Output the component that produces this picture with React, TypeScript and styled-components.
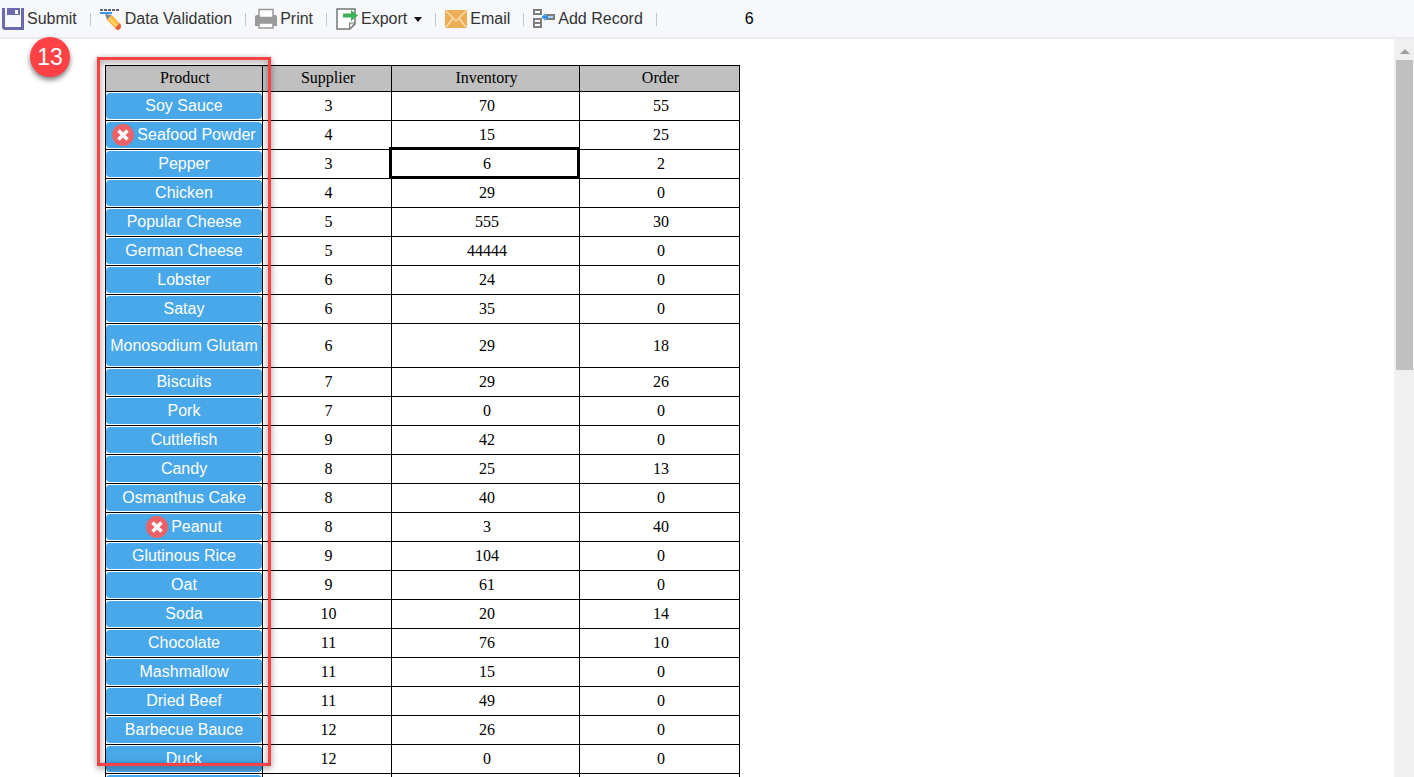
import React from "react";
import styled, { createGlobalStyle } from "styled-components";

const GlobalStyle = createGlobalStyle`
  * { box-sizing: border-box; }
  body {
    margin: 0;
    background: #fff;
    color: #000;
    font-family: "Liberation Serif", "Times New Roman", serif;
  }
`;

const Page = styled.div`
  display: flex;
  flex-direction: column;
  height: 100vh;
  overflow: hidden;
`;

const Toolbar = styled.header`
  display: flex;
  flex: none;
  align-items: center;
  height: 39px;
  padding: 1px 0 0 2px;
  background: #f7f8fb;
  border-bottom: 2px solid #ebecf0;
`;

const ToolButton = styled.button`
  display: flex;
  align-items: center;
  gap: 3px;
  padding: 0;
  border: 0;
  background: none;
  color: #333;
  font: 16px/22px "Liberation Sans", Arial, sans-serif;
  white-space: nowrap;
  cursor: pointer;

  svg { flex: none; }
`;

const Separator = styled.span`
  flex: none;
  width: 1px;
  height: 13px;
  margin: 0 9px 0 13px;
  background: #c4c5c8;
`;

const Caret = styled.span`
  margin-left: 4px;
  border: 4px solid transparent;
  border-top: 5px solid #111;
  border-bottom: 0;
`;

const CellInput = styled.input`
  width: 120px;
  margin-left: 79px;
  padding: 0;
  border: 0;
  background: none;
  color: #000;
  font: 16px/22px "Liberation Sans", Arial, sans-serif;
  outline: none;
`;

const Body = styled.main`
  display: flex;
  flex: 1;
  min-height: 0;
`;

const Viewport = styled.div`
  flex: 1;
  min-width: 0;
  padding: 26px 0 0 105px;
`;

const Sheet = styled.div`
  position: relative;
  width: 635px;
`;

const Grid = styled.table`
  width: 100%;
  table-layout: fixed;
  border-collapse: collapse;
  font-size: 16px;
  line-height: 20px;
  text-align: center;
`;

const Col = styled.col<{ $width: number }>`
  width: ${(p) => p.$width}px;
`;

const HeadCell = styled.th`
  height: 26px;
  padding: 0 0 2px 2px;
  border: 1px solid #000;
  background: #c0c0c0;
  font-weight: 400;
`;

const Row = styled.tr<{ $tall?: boolean }>`
  height: ${(p) => (p.$tall ? 44 : 29)}px;
`;

const Cell = styled.td<{ $selected?: boolean }>`
  position: relative;
  padding: 0 0 0 3px;
  border: 1px solid #000;

  &::after {
    content: "";
    display: ${(p) => (p.$selected ? "block" : "none")};
    position: absolute;
    inset: -3px -1px -1px -3px;
    border: 3px solid #000;
  }
`;

const ProductCell = styled.td`
  padding: 0;
  border: 1px solid #000;
`;

const ProductButton = styled.button<{ $tall?: boolean }>`
  display: flex;
  align-items: center;
  justify-content: center;
  gap: 3px;
  width: 100%;
  height: ${(p) => (p.$tall ? 41 : 26)}px;
  padding: 0;
  border: 0;
  border-radius: 4px;
  background: #48a8ea;
  color: #fff;
  font: 16px/20px "Liberation Sans", Arial, sans-serif;
  white-space: nowrap;
  cursor: pointer;

  svg { flex: none; }
`;

const Highlight = styled.div`
  position: absolute;
  top: -8px;
  left: -8px;
  width: 174px;
  height: 709px;
  border: 3px solid #fe4145;
  filter: drop-shadow(0 2px 3px rgba(0, 0, 0, 0.55));
  pointer-events: none;
`;

const StepBadge = styled.div`
  position: absolute;
  top: -28px;
  left: -75px;
  width: 40px;
  height: 40px;
  border-radius: 50%;
  background: #fe4145;
  box-shadow: 0 3px 5px rgba(0, 0, 0, 0.5);
  color: #fff;
  font: 23px/40px "Liberation Sans", Arial, sans-serif;
  text-align: center;
`;

const ScrollTrack = styled.div`
  flex: none;
  width: 20px;
  padding: 0 1px 0 2px;
  background: #f0f0f0;
`;

const ScrollUp = styled.div`
  display: flex;
  align-items: center;
  justify-content: center;
  height: 21px;
  padding-top: 3px;

  &::before {
    content: "";
    border: 5px solid transparent;
    border-bottom-color: #a0a0a0;
    border-top: 0;
  }
`;

const ScrollThumb = styled.div`
  height: 42%;
  background: #c0c0c0;
`;

const SaveIcon = () => (
  <svg width="22" height="22" viewBox="0 0 22 22" aria-hidden="true">
    <path d="M0 0H22V22H2L0 20Z" fill="#6a69ae" />
    <path d="M3 0H19V9H3Z" fill="#f7f8fb" />
    <path d="M5 0H18V7H5Z" fill="#6a69ae" />
    <path d="M13 2H16V6H13Z" fill="#f7f8fb" />
    <path d="M3 9H19V19H3Z" fill="#f7f8fb" />
  </svg>
);

const ValidationIcon = () => (
  <svg width="22" height="22" viewBox="0 0 22 22" aria-hidden="true">
    <path d="M0 2H20" stroke="#666" strokeWidth="2" strokeDasharray="3 1" />
    <path d="M0 5H12" stroke="#3d97f2" strokeWidth="2" />
    <path d="M5 6L7 12L12 7Z" fill="#888" />
    <path d="M7 12L12 7L20 16L15 20Z" fill="#f8b83e" />
    <path d="M9 10L17 18" stroke="#ffd36e" strokeWidth="2" />
    <path d="M15 20L20 15L21 18Q21 22 17 22Z" fill="#ee5a31" />
  </svg>
);

const PrintIcon = () => (
  <svg width="22" height="22" viewBox="0 0 22 22" aria-hidden="true">
    <rect x="4" y="1.500" width="14" height="8" fill="#fff" stroke="#999" strokeWidth="1.500" />
    <path d="M2 7H4V10H18V7H20Q22 7 22 9V18H0V9Q0 7 2 7Z" fill="#999" />
    <rect x="4" y="15" width="14" height="5" fill="#fff" stroke="#999" strokeWidth="1.500" />
  </svg>
);

const ExportIcon = () => (
  <svg width="22" height="22" viewBox="0 0 22 22" aria-hidden="true">
    <path d="M1 1H19V16L14 21H1Z" fill="#fff" stroke="#777" strokeWidth="1.500" />
    <path d="M19 15H13.500V21Z" fill="#eee" stroke="#777" />
    <path d="M7 5.500H15V2L22 7.500L15 13V9.500H7Z" fill="#42b058" />
  </svg>
);

const EmailIcon = () => (
  <svg width="22" height="18" viewBox="0 0 22 18" aria-hidden="true">
    <rect width="22" height="18" rx="1" fill="#edaf54" />
    <path d="M1 1L11 11L21 1M1 17L8 8.500M21 17L14 8.500" fill="none" stroke="#fbe3bd" strokeWidth="1.200" />
  </svg>
);

const AddRecordIcon = () => (
  <svg width="22" height="22" viewBox="0 0 22 22" aria-hidden="true">
    <g fill="#fff" stroke="#7d7d7d" strokeWidth="2">
      <rect x="1" y="2" width="7" height="4" />
      <rect x="1" y="11" width="7" height="4" />
      <rect x="1" y="15" width="7" height="4" />
      <rect x="14" y="7" width="7" height="4" fill="#a9d3f7" />
    </g>
    <path d="M8.500 9L12.500 5V8H15V10H12.500V13Z" fill="#3292f3" />
  </svg>
);

const ErrorIcon = () => (
  <svg width="22" height="22" viewBox="0 0 22 22" role="img" aria-label="Error">
    <circle cx="11" cy="11" r="11" fill="#ea6166" />
    <path d="M6.500 6.500L15.500 15.500M15.500 6.500L6.500 15.500" stroke="#fff" strokeWidth="3.500" />
  </svg>
);

const tools = [
  { label: "Submit", icon: <SaveIcon /> },
  { label: "Data Validation", icon: <ValidationIcon /> },
  { label: "Print", icon: <PrintIcon /> },
  { label: "Export", icon: <ExportIcon />, menu: true },
  { label: "Email", icon: <EmailIcon /> },
  { label: "Add Record", icon: <AddRecordIcon /> },
];

const columns = [
  { name: "Product", width: 157 },
  { name: "Supplier", width: 129 },
  { name: "Inventory", width: 188 },
  { name: "Order", width: 160 },
];

interface Item {
  product: string;
  values: (number | null)[];
  error?: boolean;
  tall?: boolean;
}

const items: Item[] = [
  { product: "Soy Sauce", values: [3, 70, 55] },
  { product: "Seafood Powder", values: [4, 15, 25], error: true },
  { product: "Pepper", values: [3, 6, 2] },
  { product: "Chicken", values: [4, 29, 0] },
  { product: "Popular Cheese", values: [5, 555, 30] },
  { product: "German Cheese", values: [5, 44444, 0] },
  { product: "Lobster", values: [6, 24, 0] },
  { product: "Satay", values: [6, 35, 0] },
  { product: "Monosodium Glutam", values: [6, 29, 18], tall: true },
  { product: "Biscuits", values: [7, 29, 26] },
  { product: "Pork", values: [7, 0, 0] },
  { product: "Cuttlefish", values: [9, 42, 0] },
  { product: "Candy", values: [8, 25, 13] },
  { product: "Osmanthus Cake", values: [8, 40, 0] },
  { product: "Peanut", values: [8, 3, 40], error: true },
  { product: "Glutinous Rice", values: [9, 104, 0] },
  { product: "Oat", values: [9, 61, 0] },
  { product: "Soda", values: [10, 20, 14] },
  { product: "Chocolate", values: [11, 76, 10] },
  { product: "Mashmallow", values: [11, 15, 0] },
  { product: "Dried Beef", values: [11, 49, 0] },
  { product: "Barbecue Bauce", values: [12, 26, 0] },
  { product: "Duck", values: [12, 0, 0] },
  { product: "", values: [null, null, null] },
];

const SELECTED = { row: 2, col: 1 };

export default function App() {
  return (
    <Page>
      <GlobalStyle />
      <Toolbar>
        {tools.map((tool) => (
          <React.Fragment key={tool.label}>
            <ToolButton type="button">
              {tool.icon}
              {tool.label}
              {tool.menu && <Caret />}
            </ToolButton>
            <Separator />
          </React.Fragment>
        ))}
        <CellInput aria-label="Cell value" defaultValue="6" />
      </Toolbar>
      <Body>
        <Viewport>
          <Sheet>
            <Grid>
              <colgroup>
                {columns.map((c) => (
                  <Col key={c.name} $width={c.width} />
                ))}
              </colgroup>
              <thead>
                <tr>
                  {columns.map((c) => (
                    <HeadCell key={c.name} scope="col">{c.name}</HeadCell>
                  ))}
                </tr>
              </thead>
              <tbody>
                {items.map((item, r) => (
                  <Row key={r} $tall={item.tall}>
                    <ProductCell>
                      <ProductButton type="button" $tall={item.tall}>
                        {item.error && <ErrorIcon />}
                        {item.product}
                      </ProductButton>
                    </ProductCell>
                    {item.values.map((v, c) => (
                      <Cell key={c} $selected={r === SELECTED.row && c === SELECTED.col}>{v}</Cell>
                    ))}
                  </Row>
                ))}
              </tbody>
            </Grid>
            <Highlight />
            <StepBadge>13</StepBadge>
          </Sheet>
        </Viewport>
        <ScrollTrack>
          <ScrollUp />
          <ScrollThumb />
        </ScrollTrack>
      </Body>
    </Page>
  );
}
